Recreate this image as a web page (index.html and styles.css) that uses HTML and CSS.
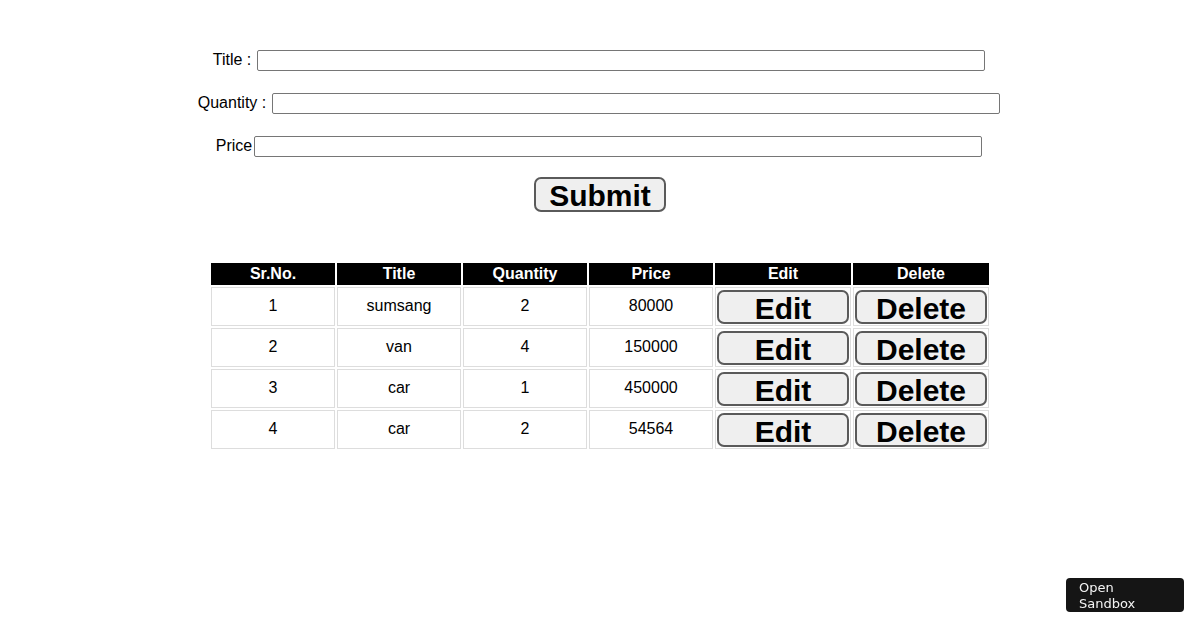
FILE: index.html
```html
<!DOCTYPE html>
<html>
<head>
<meta charset="utf-8">
<link rel="stylesheet" href="styles.css">
</head>
<body>
<div class="form">
  <div class="row"><label class="lbl">Title :</label><input class="field" type="text"></div>
  <div class="row"><label class="lbl">Quantity :</label><input class="field" type="text"></div>
  <div class="row"><label class="lbl lbl-tight">Price</label><input class="field" type="text"></div>
  <div class="submit-row"><button class="btn btn-submit">Submit</button></div>
</div>
<table class="grid">
  <thead>
    <tr><th class="w-a">Sr.No.</th><th class="w-a">Title</th><th class="w-a">Quantity</th><th class="w-a">Price</th><th class="w-b">Edit</th><th class="w-b">Delete</th></tr>
  </thead>
  <tbody>
    <tr><td>1</td><td>sumsang</td><td>2</td><td>80000</td><td class="act"><button class="btn btn-row">Edit</button></td><td class="act"><button class="btn btn-row">Delete</button></td></tr>
    <tr><td>2</td><td>van</td><td>4</td><td>150000</td><td class="act"><button class="btn btn-row">Edit</button></td><td class="act"><button class="btn btn-row">Delete</button></td></tr>
    <tr><td>3</td><td>car</td><td>1</td><td>450000</td><td class="act"><button class="btn btn-row">Edit</button></td><td class="act"><button class="btn btn-row">Delete</button></td></tr>
    <tr><td>4</td><td>car</td><td>2</td><td>54564</td><td class="act"><button class="btn btn-row">Edit</button></td><td class="act"><button class="btn btn-row">Delete</button></td></tr>
  </tbody>
</table>
<a class="sandbox">Open Sandbox</a>
</body>
</html>
```
FILE: styles.css
```css
html, body {
  margin: 0;
  padding: 0;
  background: #fff;
  font-family: "Liberation Sans", Arial, sans-serif;
  color: #000;
}
.form {
  padding-top: 50px;
}
.row {
  display: flex;
  justify-content: center;
  align-items: center;
  height: 21px;
  margin-bottom: 22px;
  padding-right: 2px;
  font-size: 16px;
}
.lbl {
  margin-right: 6px;
  padding-bottom: 2px;
  white-space: pre;
}
.lbl-tight {
  margin-right: 2px;
}
.field {
  box-sizing: border-box;
  width: 728px;
  height: 21px;
  margin: 0;
  padding: 1px 2px;
  border: 1px solid #767676;
  border-radius: 2px;
  background: #fff;
  font-size: 13px;
}
.submit-row {
  display: flex;
  justify-content: center;
  margin-top: -2px;
}
.btn {
  box-sizing: border-box;
  width: 132px;
  margin: 0;
  padding: 0;
  border: 2px solid #5a5a5a;
  border-radius: 7px;
  background: #efefef;
  font-family: "Liberation Sans", Arial, sans-serif;
  font-weight: bold;
  font-size: 30px;
  color: #000;
  line-height: 1;
}
.btn-submit {
  height: 35px;
  padding-top: 2px;
}
.grid {
  margin: 49px auto 0;
  border-spacing: 2px;
  font-size: 16px;
}
.grid th {
  background: #000;
  color: #fff;
  font-weight: bold;
  height: 22px;
  padding: 0;
  line-height: 18px;
}
.w-a { width: 124px; }
.w-b { width: 136px; }
.grid td {
  box-sizing: border-box;
  height: 39px;
  padding: 0 1px 2px;
  border: 1px solid #dddddd;
  text-align: center;
  vertical-align: middle;
}
.grid td.act {
  padding: 2px 1px 1px;
}
.btn-row {
  display: block;
  height: 34px;
  padding-top: 2px;
}
.sandbox {
  position: fixed;
  right: 16px;
  bottom: 18px;
  box-sizing: border-box;
  width: 118px;
  height: 34px;
  padding: 2px 13px 0;
  background: #151515;
  border-radius: 4px;
  color: #f4f4f4;
  font-family: "DejaVu Sans", Verdana, sans-serif;
  font-size: 13px;
  line-height: 16px;
}
```
